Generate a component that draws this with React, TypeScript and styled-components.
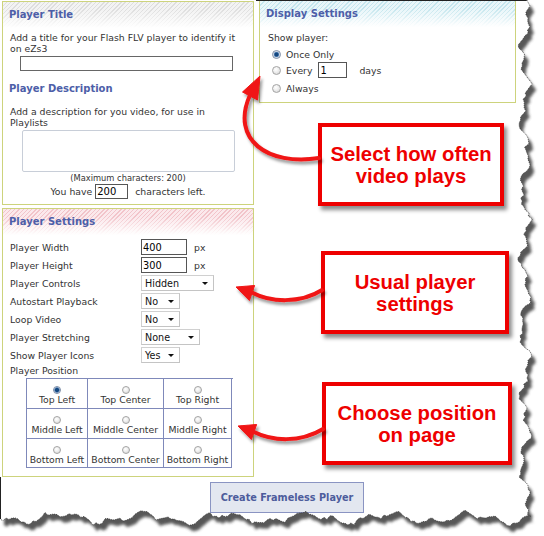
import React from 'react';
import styled, { createGlobalStyle } from 'styled-components';

const Global = createGlobalStyle`
  html, body { margin: 0; padding: 0; background: #fff; }
  body { font-family: "DejaVu Sans", Verdana, sans-serif; }
`;

type Tone = 'grey' | 'pink' | 'blue';
const tones: Record<Tone, [string, string]> = {
  grey: ['#dedede', '#f3f3f3'],
  pink: ['#f2c4ca', '#fbe9ec'],
  blue: ['#c4e6ee', '#e9f6f9'],
};

const Page = styled.div`
  position: relative;
  width: 544px;
  height: 536px;
  overflow: hidden;
  background: #fff;
  box-sizing: border-box;
  padding: 1px 0 0 2px;
  font-family: "DejaVu Sans", Verdana, sans-serif;
  font-size: 9.3px;
  line-height: 11px;
  color: #333;
`;

const Columns = styled.div`
  display: flex;
  gap: 5px;
  align-items: flex-start;
`;

const LeftCol = styled.div`
  width: 252px;
  display: flex;
  flex-direction: column;
  gap: 3px;
`;

const RightCol = styled.div`
  width: 257px;
  margin-top: -1px;
  display: flex;
  flex-direction: column;
`;

const Panel = styled.section<{ $h: number }>`
  box-sizing: border-box;
  height: ${(p) => p.$h}px;
  border: 1px solid #cdd37c;
  background: #fff;
`;

const PanelHeader = styled.div<{ $tone: Tone }>`
  height: 26px;
  box-sizing: border-box;
  padding: 7px 0 0 6px;
  background:
    linear-gradient(to bottom, rgba(255, 255, 255, 0) 30%, #fff 100%),
    repeating-linear-gradient(
      -45deg,
      ${(p) => tones[p.$tone][0]} 0 1px,
      ${(p) => tones[p.$tone][1]} 1px 3px
    );
`;

const HeaderTitle = styled.h2`
  margin: 0;
  font-size: 10px;
  line-height: 12px;
  font-weight: bold;
  color: #4d5ea8;
`;

const SubTitle = styled.h3`
  margin: 12px 0 0 -1px;
  font-size: 10px;
  line-height: 12px;
  font-weight: bold;
  color: #4d5ea8;
`;

const InfoBody = styled.div`
  padding: 4px 7px 0;
`;

const Para = styled.p<{ $mt?: number }>`
  margin: ${(p) => p.$mt ?? 0}px 0 0;
`;

const TitleInput = styled.div`
  box-sizing: border-box;
  width: 213px;
  height: 15px;
  margin: 2px 0 0 10px;
  border: 1px solid #666;
  background: #fff;
`;

const DescArea = styled.div`
  box-sizing: border-box;
  width: 213px;
  height: 42px;
  margin: 2px 0 0 12px;
  border: 1px solid #c8ced8;
  border-radius: 2px;
  background: #fff;
`;

const SmallNote = styled.div`
  margin-top: 1px;
  text-align: center;
  font-size: 8.3px;
  line-height: 10px;
`;

const CountRow = styled.div`
  margin-top: 1px;
  display: flex;
  justify-content: center;
  align-items: center;
  height: 15px;
`;

const CountInput = styled.span`
  box-sizing: border-box;
  width: 33px;
  height: 15px;
  margin: 0 7px 0 3px;
  border: 1px solid #555;
  padding: 1px 1px 0;
  color: #000;
  font-size: 10px;
  line-height: 12px;
`;

const SettingsBody = styled.div`
  padding: 3px 7px 0;
`;

const SettingsGrid = styled.div`
  display: grid;
  grid-template-columns: 131px auto;
  grid-auto-rows: 18px;
  align-items: center;
`;

const Label = styled.span``;

const Control = styled.div`
  display: flex;
  align-items: center;
`;

const TextBox = styled.span<{ $w: number }>`
  box-sizing: border-box;
  width: ${(p) => p.$w}px;
  height: 16px;
  border: 1px solid #555;
  padding: 1px 1px 0;
  color: #000;
  font-size: 9.8px;
  line-height: 13px;
`;

const Unit = styled.span`
  margin-left: 7px;
`;

const Select = styled.div<{ $w: number }>`
  box-sizing: border-box;
  width: ${(p) => p.$w}px;
  height: 16px;
  border: 1px solid #d0d0d0;
  border-right-color: #c4c4c4;
  border-bottom-color: #c4c4c4;
  background: #fff;
  padding: 0 5px 0 3px;
  display: flex;
  align-items: center;
  justify-content: space-between;
  color: #111;
  font-size: 9.6px;
`;

const Caret = styled.span`
  width: 0;
  height: 0;
  border-left: 3px solid transparent;
  border-right: 3px solid transparent;
  border-top: 3px solid #111;
`;

const PositionLabel = styled.div`
  margin-top: 1px;
`;

const PositionGrid = styled.div`
  margin: 2px 0 0 16px;
  width: 206px;
  display: grid;
  grid-template-columns: 61px 76px 68px;
  grid-template-rows: 30px 30px 29px;
  border-left: 1px solid #7f89ba;
  border-top: 1px solid #7f89ba;
`;

const Cell = styled.div`
  box-sizing: border-box;
  border-right: 1px solid #7f89ba;
  border-bottom: 1px solid #7f89ba;
  display: flex;
  flex-direction: column;
  align-items: center;
  padding-top: 7px;
  white-space: nowrap;
`;

const Radio = styled.span<{ $on?: boolean }>`
  display: inline-block;
  flex: none;
  width: 9px;
  height: 9px;
  box-sizing: border-box;
  border-radius: 50%;
  border: 1px solid ${(p) => (p.$on ? '#7d8da6' : '#a4a4a4')};
  background: ${(p) =>
    p.$on
      ? 'radial-gradient(circle, #14477f 0 1.6px, #5f8cc0 2.4px, #e6e9ee 3.2px)'
      : 'radial-gradient(circle at 40% 35%, #ffffff 0, #f0f0f0 40%, #d0d0d0 100%)'};
`;

const CellRadio = styled(Radio)`
  width: 8px;
  height: 8px;
`;

const DisplayBody = styled.div`
  padding: 5px 8px 0;
`;

const OptionRow = styled.div<{ $h: number; $mt: number }>`
  display: flex;
  align-items: center;
  gap: 5px;
  height: ${(p) => p.$h}px;
  margin-top: ${(p) => p.$mt}px;
  padding-left: 4px;
`;

const DaysInput = styled(TextBox)`
  margin: 0 7px 0 1px;
`;

const Callout = styled.div<{ $x: number; $w: number; $mt: number }>`
  box-sizing: border-box;
  margin: ${(p) => p.$mt}px 0 0 ${(p) => p.$x}px;
  width: ${(p) => p.$w}px;
  height: 83px;
  border: 4px solid #ee0000;
  background: #fff;
  box-shadow: 3px 4px 4px rgba(0, 0, 0, 0.45);
  display: flex;
  align-items: center;
  justify-content: center;
  text-align: center;
  font-family: "Liberation Sans", Arial, sans-serif;
  font-weight: bold;
  font-size: 20.3px;
  line-height: 22px;
  color: #ee0000;
`;

const ButtonRow = styled.div`
  margin-top: 5px;
  padding-left: 208px;
`;

const CreateButton = styled.button`
  box-sizing: border-box;
  width: 154px;
  height: 31px;
  border: 1px solid #8a94c2;
  background: #e3e7f0;
  color: #4d5c9c;
  font-family: "DejaVu Sans", Verdana, sans-serif;
  font-weight: bold;
  font-size: 9.7px;
  padding: 0;
`;

const OverlaySvg = styled.svg`
  position: absolute;
  left: 0;
  top: 0;
  pointer-events: none;
`;

/* ---------- torn paper edge ---------- */
const rand = (() => {
  let s = 48271;
  return () => {
    s = (s * 16807) % 2147483647;
    return s / 2147483647;
  };
})();

const rightPts: [number, number][] = [];
for (let y = 0; y <= 516; y += 3) {
  const x = 525 + 4 * Math.sin(y / 11) + 2.6 * Math.sin(y / 4.3 + 1) + (rand() - 0.5) * 3.5;
  rightPts.push([x, y]);
}
const bottomPts: [number, number][] = [];
for (let x = 531; x >= 0; x -= 3) {
  const y = 518 + 4 * Math.sin(x / 13) + 2.6 * Math.sin(x / 5.1 + 2) + (rand() - 0.5) * 3.5;
  bottomPts.push([x, y]);
}
const fmt = (pts: [number, number][]) => pts.map(([a, b]) => `${a.toFixed(1)},${b.toFixed(1)}`).join(' L');
const edgePath = `M${fmt(rightPts)} L${fmt(bottomPts)}`;
const paperPath = `M0,0 L${rightPts[0][0].toFixed(1)},0 L${fmt(rightPts)} L${fmt(bottomPts)} L0,0 Z`;

const TornEdge = () => (
  <OverlaySvg width={544} height={536} viewBox="0 0 544 536">
    <defs>
      <filter id="tornBlur" x="-5%" y="-5%" width="110%" height="110%">
        <feGaussianBlur stdDeviation="1.6" />
      </filter>
      <mask id="outsidePaper" maskUnits="userSpaceOnUse" x="0" y="0" width="544" height="536">
        <rect x="0" y="0" width="544" height="536" fill="#fff" />
        <path d={paperPath} fill="#000" />
      </mask>
    </defs>
    <g mask="url(#outsidePaper)">
      <rect x="0" y="0" width="544" height="536" fill="#fff" />
      <path d={paperPath} transform="translate(4,6)" fill="#444" opacity="0.9" filter="url(#tornBlur)" />
    </g>
    <path d={edgePath} fill="none" stroke="#333" strokeWidth="0.8" strokeDasharray="1 1" />
    <line x1="256" y1="0.5" x2={rightPts[0][0]} y2="0.5" stroke="#222" strokeWidth="1" />
    <line x1="0.5" y1="477" x2="0.5" y2={bottomPts[bottomPts.length - 1][1]} stroke="#222" strokeWidth="1" />
  </OverlaySvg>
);

/* ---------- annotation arrows ---------- */
const Arrows = () => (
  <OverlaySvg width={544} height={536} viewBox="0 0 544 536">
    <defs>
      <filter id="arrowShadow" x="-20%" y="-20%" width="140%" height="140%">
        <feDropShadow dx="2" dy="3" stdDeviation="1.5" floodColor="#000" floodOpacity="0.4" />
      </filter>
    </defs>
    <g filter="url(#arrowShadow)" fill="#f01414" stroke="#f01414" strokeLinejoin="round">
      <path d="M319,158 C268,166 230,140 250,95" fill="none" strokeWidth="4" strokeLinecap="round" />
      <polygon points="260,76 257.5,100 242.5,92" strokeWidth="1" />
      <path d="M322,290 C300,304 270,302 253,293" fill="none" strokeWidth="4" strokeLinecap="round" />
      <polygon points="236,287 254.6,285.5 249.4,300.5" strokeWidth="1" />
      <path d="M323,429 C300,443 272,441 254,432" fill="none" strokeWidth="4" strokeLinecap="round" />
      <polygon points="238,426 256.6,424.5 251.4,439.5" strokeWidth="1" />
    </g>
  </OverlaySvg>
);

const settings: { label: string; kind: 'text' | 'select'; value: string; w: number }[] = [
  { label: 'Player Width', kind: 'text', value: '400', w: 46 },
  { label: 'Player Height', kind: 'text', value: '300', w: 46 },
  { label: 'Player Controls', kind: 'select', value: 'Hidden', w: 73 },
  { label: 'Autostart Playback', kind: 'select', value: 'No', w: 39 },
  { label: 'Loop Video', kind: 'select', value: 'No', w: 39 },
  { label: 'Player Stretching', kind: 'select', value: 'None', w: 59 },
  { label: 'Show Player Icons', kind: 'select', value: 'Yes', w: 39 },
];

const positions = [
  'Top Left', 'Top Center', 'Top Right',
  'Middle Left', 'Middle Center', 'Middle Right',
  'Bottom Left', 'Bottom Center', 'Bottom Right',
];

export default function App() {
  return (
    <Page>
      <Global />
      <Columns>
        <LeftCol>
          <Panel $h={204}>
            <PanelHeader $tone="grey">
              <HeaderTitle>Player Title</HeaderTitle>
            </PanelHeader>
            <InfoBody>
              <Para>
                Add a title for your Flash FLV player to identify it
                <br />
                on eZs3
              </Para>
              <TitleInput />
              <SubTitle>Player Description</SubTitle>
              <Para $mt={11}>
                Add a description for you video, for use in
                <br />
                Playlists
              </Para>
              <DescArea />
              <SmallNote>(Maximum characters: 200)</SmallNote>
              <CountRow>
                <span>You have</span>
                <CountInput>200</CountInput>
                <span>characters left.</span>
              </CountRow>
            </InfoBody>
          </Panel>
          <Panel $h={269}>
            <PanelHeader $tone="pink">
              <HeaderTitle>Player Settings</HeaderTitle>
            </PanelHeader>
            <SettingsBody>
              <SettingsGrid>
                {settings.map((s) => (
                  <React.Fragment key={s.label}>
                    <Label>{s.label}</Label>
                    <Control>
                      {s.kind === 'text' ? (
                        <>
                          <TextBox $w={s.w}>{s.value}</TextBox>
                          <Unit>px</Unit>
                        </>
                      ) : (
                        <Select $w={s.w}>
                          <span>{s.value}</span>
                          <Caret />
                        </Select>
                      )}
                    </Control>
                  </React.Fragment>
                ))}
              </SettingsGrid>
              <PositionLabel>Player Position</PositionLabel>
              <PositionGrid>
                {positions.map((p, i) => (
                  <Cell key={p}>
                    <CellRadio $on={i === 0} />
                    <span>{p}</span>
                  </Cell>
                ))}
              </PositionGrid>
            </SettingsBody>
          </Panel>
        </LeftCol>
        <RightCol>
          <Panel $h={103}>
            <PanelHeader $tone="blue">
              <HeaderTitle>Display Settings</HeaderTitle>
            </PanelHeader>
            <DisplayBody>
              <div>Show player:</div>
              <OptionRow $h={15} $mt={4}>
                <Radio $on />
                <span>Once Only</span>
              </OptionRow>
              <OptionRow $h={16} $mt={0}>
                <Radio />
                <span>Every</span>
                <DaysInput $w={29}>1</DaysInput>
                <span>days</span>
              </OptionRow>
              <OptionRow $h={15} $mt={3}>
                <Radio />
                <span>Always</span>
              </OptionRow>
            </DisplayBody>
          </Panel>
          <Callout $x={59} $w={186} $mt={20}>
            Select how often
            <br />
            video plays
          </Callout>
          <Callout $x={62} $w={188} $mt={45}>
            Usual player
            <br />
            settings
          </Callout>
          <Callout $x={63} $w={190} $mt={48}>
            Choose position
            <br />
            on page
          </Callout>
        </RightCol>
      </Columns>
      <ButtonRow>
        <CreateButton type="button">Create Frameless Player</CreateButton>
      </ButtonRow>
      <Arrows />
      <TornEdge />
    </Page>
  );
}
